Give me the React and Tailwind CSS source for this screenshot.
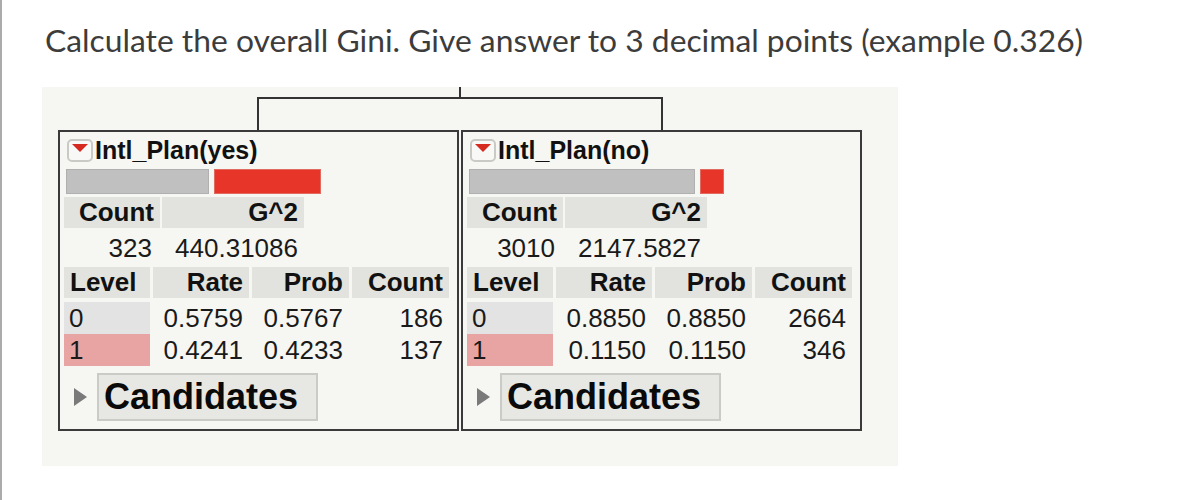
import React from 'react';

const nodes = [
    {
        title: 'Intl_Plan(yes)',
        grayBar: 143,
        redBar: 107,
        count: '323',
        g2: '440.31086',
        levels: [
            { level: '0', rate: '0.5759', prob: '0.5767', count: '186' },
            { level: '1', rate: '0.4241', prob: '0.4233', count: '137' },
        ],
    },
    {
        title: 'Intl_Plan(no)',
        grayBar: 226,
        redBar: 24,
        count: '3010',
        g2: '2147.5827',
        levels: [
            { level: '0', rate: '0.8850', prob: '0.8850', count: '2664' },
            { level: '1', rate: '0.1150', prob: '0.1150', count: '346' },
        ],
    },
];

function DisclosureButton() {
    return (
        <div className="w-[26px] h-[23px] rounded-[5px] border-2 border-[#c9c9c6] bg-[#f8f8f6] flex justify-center pt-[2px]">
            <svg width="18" height="10" viewBox="0 0 18 10">
                <polygon points="1,1 17,1 9,9" fill="#d42a20" />
            </svg>
        </div>
    );
}

function NodeBox({ node }) {
    const headCell = 'bg-[#e2e3de] h-[31px] flex items-center font-bold text-[26px] text-[#111]';
    const numCell = 'h-[32px] flex items-center justify-end pr-[6px] text-[26px] text-[#1a1a1a]';

    return (
        <div className="w-[401px] h-[301px] border-2 border-[#3a3a3a] flex flex-col">
            <div className="mt-[6px] ml-[7px] h-[24px] flex items-center">
                <DisclosureButton />
                <span className="ml-[2px] font-bold text-[25px] text-[#111] leading-none">
                    {node.title}
                </span>
            </div>

            <div className="mt-[7px] ml-[6px] h-[25px] flex gap-[5px]">
                <div className="h-full bg-[#c0c0c0] border border-[#b0b0b0]" style={{ width: node.grayBar }} />
                <div className="h-full bg-[#e8352a] border border-[#e06a60]" style={{ width: node.redBar }} />
            </div>

            <div className="mt-[3px] ml-[4px] grid grid-cols-[96px_142px] gap-x-[2px]">
                <div className={headCell + ' justify-end pr-[6px]'}>Count</div>
                <div className={headCell + ' justify-end pr-[6px]'}>G^2</div>
                <div className="col-span-2 h-[4px]" />
                <div className={numCell + ' pr-[8px]'}>{node.count}</div>
                <div className={numCell}>{node.g2}</div>
            </div>

            <div className="mt-[3px] ml-[4px] grid grid-cols-[86px_96px_97px_97px] gap-x-[3px]">
                <div className={headCell + ' pl-[6px]'}>Level</div>
                <div className={headCell + ' justify-end pr-[6px]'}>Rate</div>
                <div className={headCell + ' justify-end pr-[6px]'}>Prob</div>
                <div className={headCell + ' justify-end pr-[6px]'}>Count</div>
                <div className="col-span-4 h-[4px]" />
                {node.levels.map((row, i) => (
                    <React.Fragment key={row.level}>
                        <div className={(i === 0 ? 'bg-[#e3e3e3]' : 'bg-[#e8a3a3]') + ' h-[32px] flex items-center pl-[5px] text-[26px] text-[#1a1a1a]'}>
                            {row.level}
                        </div>
                        <div className={numCell}>{row.rate}</div>
                        <div className={numCell}>{row.prob}</div>
                        <div className={numCell}>{row.count}</div>
                    </React.Fragment>
                ))}
            </div>

            <div className="mt-[7px] ml-[13px] flex items-center">
                <svg width="15" height="20" viewBox="0 0 15 20">
                    <polygon points="1,1 14,10 1,19" fill="#7a7a7a" />
                </svg>
                <div className="ml-[9px] w-[221px] h-[48px] bg-[#e7e7e3] border-2 border-[#cacac6] flex items-center pl-[5px] font-bold text-[36px] text-[#0a0a0a]">
                    Candidates
                </div>
            </div>
        </div>
    );
}

export default function App() {
    return (
        <div className="w-[1180px] min-h-[500px] bg-white border-l-2 border-[#ababab] font-['Liberation_Sans',Arial,sans-serif]">
            <h1 className="pl-[43px] pt-[24px] text-[31.8px] leading-[32px] text-[#3c3c3c] font-normal font-['Lato','Noto_Sans',sans-serif]">
                Calculate the overall Gini. Give answer to 3 decimal points (example 0.326)
            </h1>

            <div className="ml-[40px] mt-[31px] w-[856px] h-[379px] bg-[#f6f6f2]">
                <div className="ml-[417px] w-[2px] h-[10px] bg-[#333]" />
                <div className="ml-[215px] w-[406px] h-[33px] border-2 border-b-0 border-[#333]" />
                <div className="ml-[16px] flex gap-[2px]">
                    {nodes.map((node) => (
                        <NodeBox key={node.title} node={node} />
                    ))}
                </div>
            </div>
        </div>
    );
}
